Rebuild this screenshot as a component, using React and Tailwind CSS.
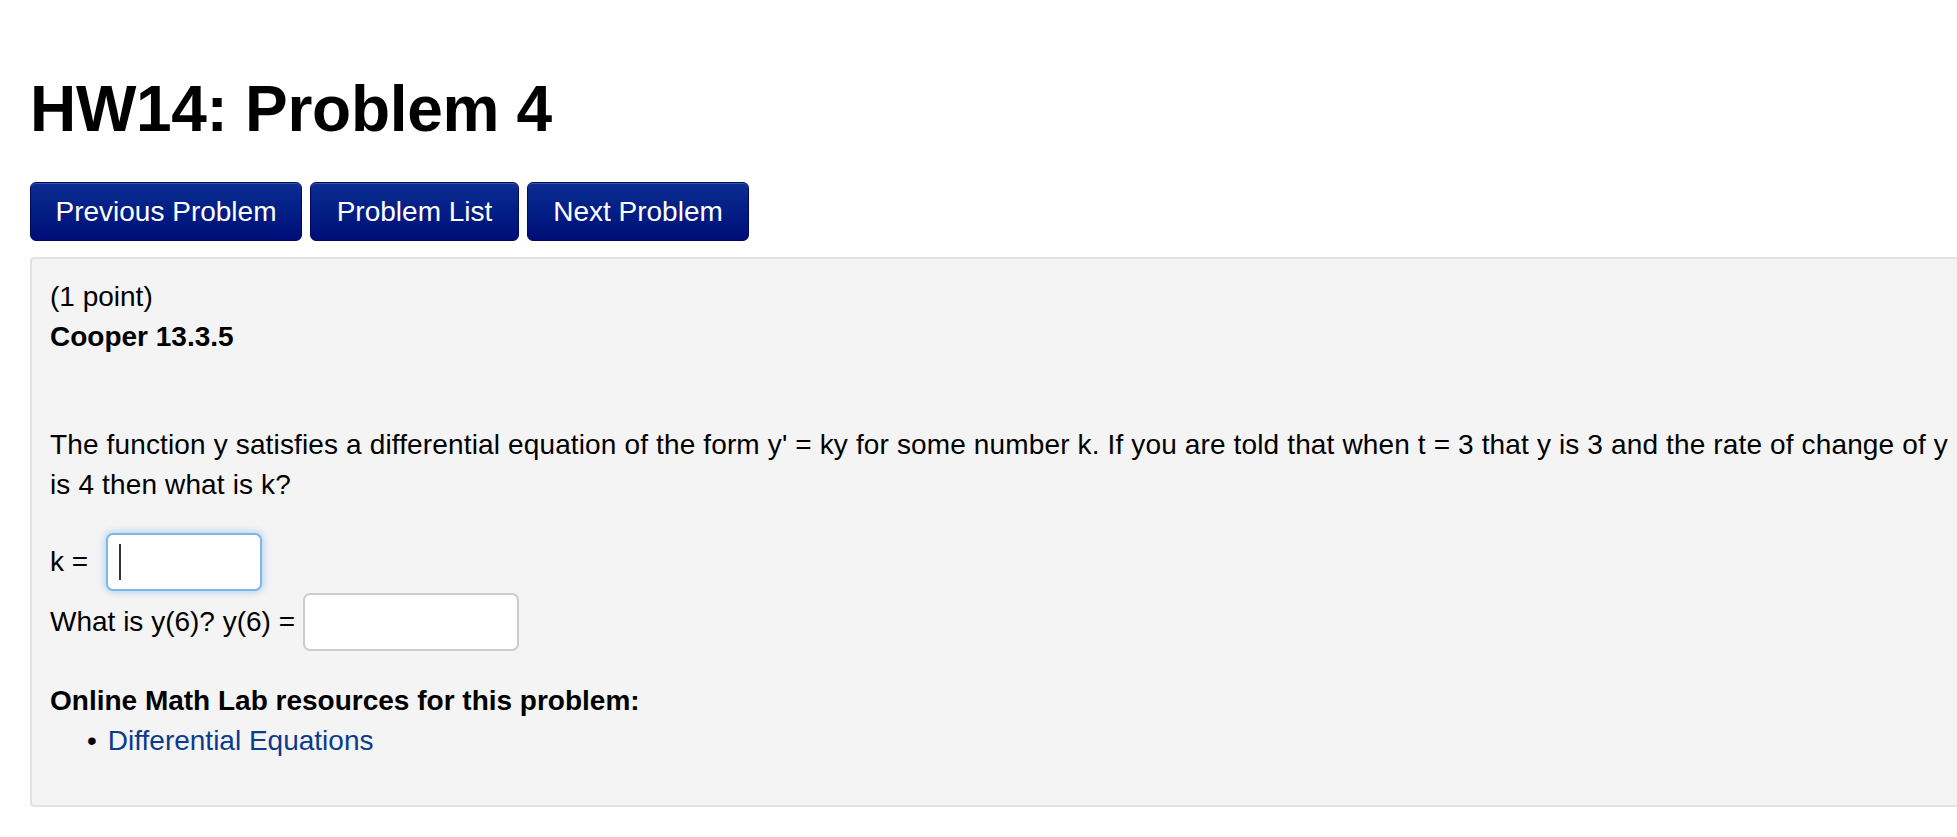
export default function App() {
    return (
        <div className="min-h-[837px] w-full overflow-hidden bg-white text-black font-['Liberation_Sans',Arial,sans-serif]">
            <div className="pl-[30px]">
                <h1 className="mt-[74px] text-[64px] leading-[70px] font-bold tracking-[-0.3px]">HW14: Problem 4</h1>

                <div className="mt-[38px] flex gap-[8px]">
                    <NavButton label="Previous Problem" className="w-[272px]" />
                    <NavButton label="Problem List" className="w-[209px]" />
                    <NavButton label="Next Problem" className="w-[222px]" />
                </div>

                <div className="mt-[16px] w-[1960px] rounded-[4px] border-2 border-[#e2e2e2] bg-[#f4f4f4] pl-[18px] pt-[18px] pb-[44px] text-[28px] leading-[40px]">
                    <p>(1 point)</p>
                    <p className="font-bold">Cooper 13.3.5</p>

                    <p className="mt-[68px] w-[1910px] tracking-[0.14px]">
                        The function y satisfies a differential equation of the form y' = ky for some number k. If you are told that when t = 3 that y is 3 and the rate of change of y is 4 then what is k?
                    </p>

                    <div className="mt-[28px] flex items-center gap-[18px]">
                        <span>k =</span>
                        <div className="h-[58px] w-[156px] rounded-[7px] border-2 border-[#7db6ec] bg-white shadow-[0_0_6px_2px_rgba(120,180,235,0.45)] flex items-center pl-[11px]">
                            <div className="h-[36px] w-[2px] bg-[#333]" />
                        </div>
                    </div>
                    <div className="mt-[2px] flex items-center gap-[8px]">
                        <span>What is y(6)? y(6) =</span>
                        <div className="h-[58px] w-[216px] rounded-[7px] border-2 border-[#cccccc] bg-white" />
                    </div>

                    <p className="mt-[30px] font-bold">Online Math Lab resources for this problem:</p>
                    <div className="flex pl-[37px]">
                        <span>•</span>
                        <a href="#" className="ml-[11px] text-[#0a3b8c]">Differential Equations</a>
                    </div>
                </div>
            </div>
        </div>
    );
}

function NavButton({ label, className }) {
    return (
        <button className={"h-[59px] rounded-[6px] border border-[#000a5c] bg-linear-to-b from-[#0c2c92] to-[#000c78] text-white text-[28px] shadow-[inset_0_1px_0_rgba(255,255,255,0.2)] " + className}>
            {label}
        </button>
    );
}
